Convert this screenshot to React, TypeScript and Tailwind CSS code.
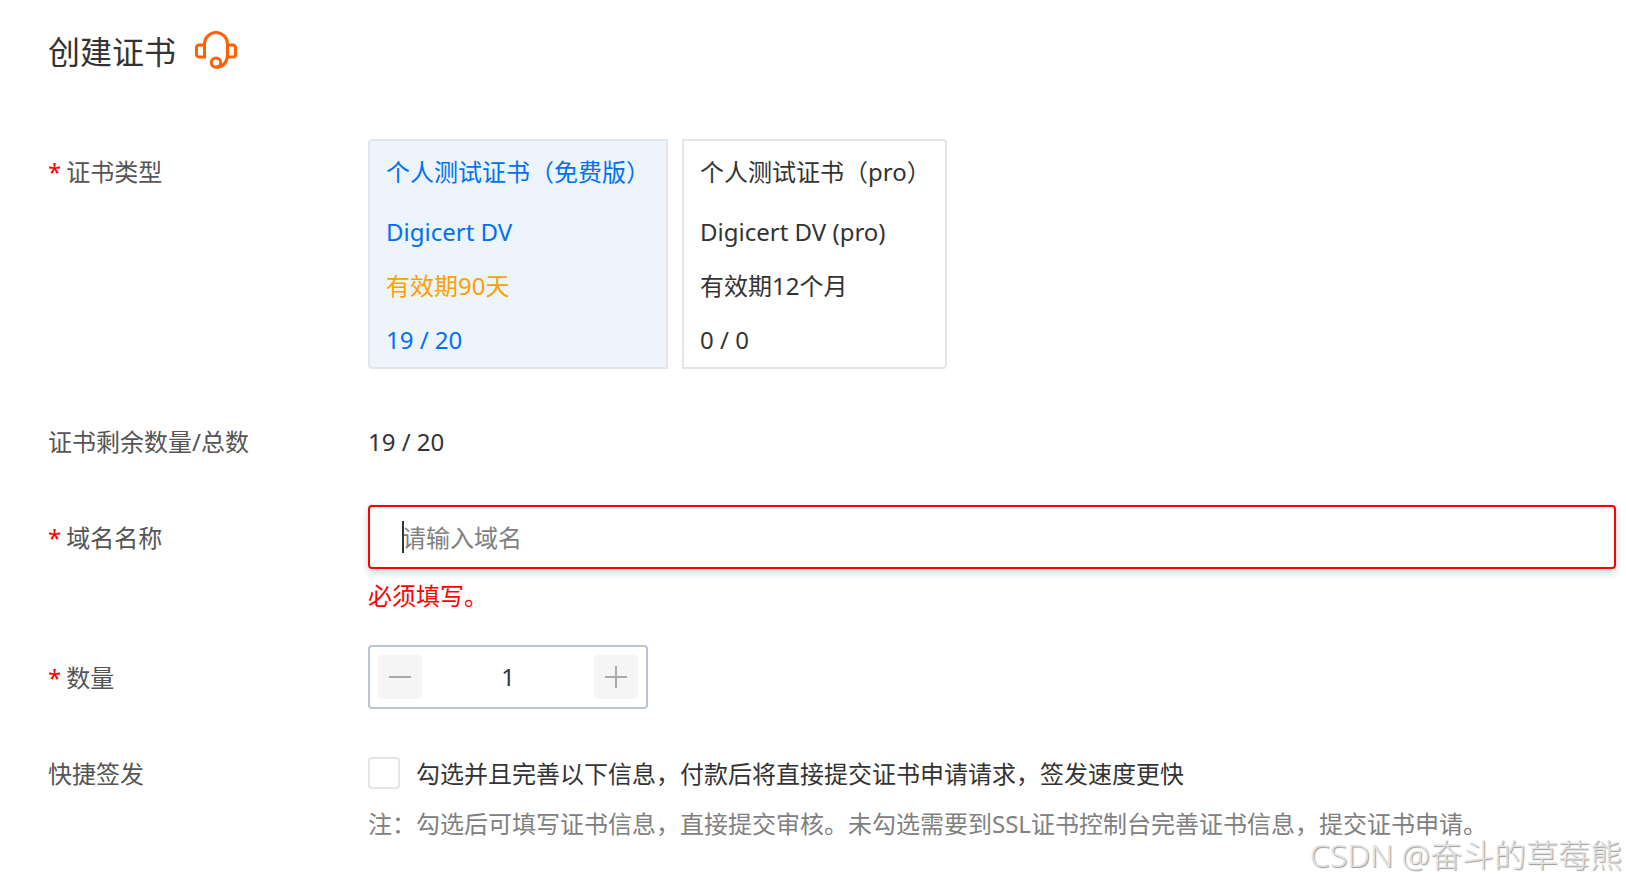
import { useState } from "react";
import type { ReactNode } from "react";

const HeadsetIcon = () => {
    return (
        <svg width="42" height="38" viewBox="0 0 42 38" fill="none" stroke="#FF6000" strokeWidth="3">
            <path d="M9.5 26H4a2.5 2.5 0 0 1-2.5-2.5V16.500A2.500 2.500 0 0 1 4 14H9.500z" />
            <path d="M32.500 14H38a2.500 2.500 0 0 1 2.500 2.500v7A2.500 2.500 0 0 1 38 26h-5.500z" />
            <path d="M9.500 14.500V13A11.500 11.500 0 0 1 32.500 13V25C31.500 32 27.500 36.300 21 36.300" />
            <circle cx="21" cy="31.600" r="4.700" />
        </svg>
    )
}

interface RowProps {
    label: string;
    required?: boolean;
    htmlFor?: string;
    labelClass?: string;
    children: ReactNode;
}

const Row = ({ label, required, htmlFor, labelClass, children }: RowProps) => {
    return (
        <div className="flex">
            <label htmlFor={htmlFor} className={`flex w-80 shrink-0 gap-[5px] text-[#555555] ${labelClass ?? ""}`}>
                {required && <span className="text-[#FF0000]">*</span>}
                {label}
            </label>
            <div className="min-w-0 flex-1">{children}</div>
        </div>
    )
}

const certs = [
    { id: "free", title: "个人测试证书（免费版）", brand: "Digicert DV", period: "有效期90天", count: "19 / 20", box: "w-[300px] rounded-l" },
    { id: "pro", title: "个人测试证书（pro）", brand: "Digicert DV (pro)", period: "有效期12个月", count: "0 / 0", box: "w-[265px] rounded-r" },
];

const App = () => {
    const [cert, setCert] = useState("free");
    const [domain, setDomain] = useState("");
    const [count, setCount] = useState(1);
    const [quick, setQuick] = useState(false);

    return (
        <main className="relative min-h-screen bg-white pl-12 pr-[10px] pt-7 pb-11 font-['Noto_Sans','Noto_Sans_CJK_SC',sans-serif] text-2xl leading-9 text-[#333333]">
            <header className="flex items-start gap-[19px]">
                <h1 className="text-[32px] leading-[48px]">创建证书</h1>
                <a href="#support" aria-label="support" className="pt-[3px]"><HeadsetIcon /></a>
            </header>

            <form className="mt-[63px]" onSubmit={(e) => e.preventDefault()}>
                <Row label="证书类型" required labelClass="pt-[15px]">
                    <div className="flex gap-[14px]">
                        {certs.map((c) => {
                            const active = c.id === cert;
                            return (
                                <label key={c.id} className={`block cursor-pointer border-2 border-[#E5E5E5] px-4 pt-[13px] pb-[9px] whitespace-nowrap ${c.box} ${active ? "bg-[#EDF4FC] text-[#0070F7]" : "bg-white"}`}>
                                    <input className="sr-only" type="radio" name="cert" checked={active} onChange={() => setCert(c.id)} />
                                    <span className="block">{c.title}</span>
                                    <span className="mt-6 block">{c.brand}</span>
                                    <span className={`mt-[18px] block ${active ? "text-[#FF9F00]" : ""}`}>{c.period}</span>
                                    <span className="mt-[18px] block">{c.count}</span>
                                </label>
                            )
                        })}
                    </div>
                </Row>

                <div className="mt-[55px]">
                    <Row label="证书剩余数量/总数">
                        <p>19 / 20</p>
                    </Row>
                </div>

                <div className="mt-[45px]">
                    <Row label="域名名称" required htmlFor="domain" labelClass="pt-[15px]">
                        <div className="relative">
                            <input id="domain" type="text" placeholder="请输入域名" value={domain} onChange={(e) => setDomain(e.target.value)} className="block h-16 w-full rounded border-2 border-[#FF0000] px-8 shadow-[0_4px_8px_rgba(0,0,0,0.16)] outline-none placeholder:text-[#808080]" />
                            {domain === "" && <span className="pointer-events-none absolute left-[34px] top-4 h-8 w-[2px] bg-[#333333]"></span>}
                        </div>
                        <p className="mt-[9px] text-[#FF0000]">必须填写。</p>
                    </Row>
                </div>

                <div className="mt-[31px]">
                    <Row label="数量" required htmlFor="count" labelClass="pt-[15px]">
                        <div className="flex h-16 w-[280px] items-center rounded border-2 border-[#BAC5D1] px-2">
                            <button type="button" aria-label="minus" onClick={() => setCount(Math.max(1, count - 1))} className="flex size-11 shrink-0 items-center justify-center rounded bg-[#F5F5F5] text-[#AAAAAA]">
                                <svg width="22" height="22" stroke="currentColor" strokeWidth="2"><path d="M0 11H22" /></svg>
                            </button>
                            <input id="count" type="text" value={count} onChange={(e) => setCount(Number(e.target.value) || 1)} className="w-full min-w-0 text-center outline-none" />
                            <button type="button" aria-label="plus" onClick={() => setCount(count + 1)} className="flex size-11 shrink-0 items-center justify-center rounded bg-[#F5F5F5] text-[#AAAAAA]">
                                <svg width="22" height="22" stroke="currentColor" strokeWidth="2"><path d="M0 11H22M11 0V22" /></svg>
                            </button>
                        </div>
                    </Row>
                </div>

                <div className="mt-[47px]">
                    <Row label="快捷签发" htmlFor="quick">
                        <div className="flex items-start gap-4">
                            <input id="quick" type="checkbox" checked={quick} onChange={(e) => setQuick(e.target.checked)} className="mt-px size-8 shrink-0 appearance-none rounded border-2 border-[#E5E5E5] bg-white checked:bg-[#0070F7]" />
                            <label htmlFor="quick">勾选并且完善以下信息，付款后将直接提交证书申请请求，签发速度更快</label>
                        </div>
                        <p className="mt-[14px] text-[#808080]">注：勾选后可填写证书信息，直接提交审核。未勾选需要到SSL证书控制台完善证书信息，提交证书申请。</p>
                    </Row>
                </div>
            </form>

            <p className="absolute bottom-3 right-1 text-[32px] leading-10 font-light text-[#E2E2E2] [text-shadow:1px_1px_1px_#999999]">CSDN @奋斗的草莓熊</p>
        </main>
    )
}

export default App;
